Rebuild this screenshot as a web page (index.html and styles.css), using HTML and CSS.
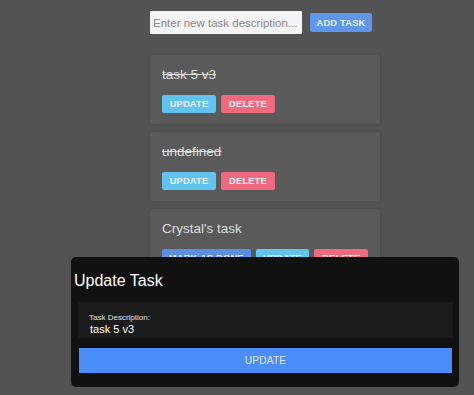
FILE: index.html
```html
<!DOCTYPE html>
<html lang="en">
<head>
<meta charset="utf-8">
<title>Tasks</title>
<link rel="stylesheet" href="styles.css">
</head>
<body>
<div class="app">
  <div class="add-row">
    <input class="task-input" type="text" placeholder="Enter new task description...">
    <button class="btn btn-add">ADD TASK</button>
  </div>
  <div class="task-list">
    <div class="card">
      <div class="title done">task 5 v3</div>
      <div class="actions">
        <button class="btn btn-update">UPDATE</button>
        <button class="btn btn-delete">DELETE</button>
      </div>
    </div>
    <div class="card">
      <div class="title done">undefined</div>
      <div class="actions">
        <button class="btn btn-update">UPDATE</button>
        <button class="btn btn-delete">DELETE</button>
      </div>
    </div>
    <div class="card">
      <div class="title">Crystal's task</div>
      <div class="actions">
        <button class="btn btn-mark">MARK AS DONE</button>
        <button class="btn btn-update">UPDATE</button>
        <button class="btn btn-delete">DELETE</button>
      </div>
    </div>
    <div class="card">
      <div class="title">New task</div>
      <div class="actions">
        <button class="btn btn-mark">MARK AS DONE</button>
        <button class="btn btn-update">UPDATE</button>
        <button class="btn btn-delete">DELETE</button>
      </div>
    </div>
  </div>
</div>

<div class="modal">
  <h2 class="modal-title">Update Task</h2>
  <div class="field">
    <div class="field-label">Task Description:</div>
    <div class="field-value">task 5 v3</div>
  </div>
  <button class="modal-btn">UPDATE</button>
</div>
</body>
</html>
```
FILE: styles.css
```css
html, body {
  margin: 0;
  padding: 0;
}
body {
  background: #535353;
  font-family: "Liberation Sans", Arial, sans-serif;
  width: 474px;
  height: 395px;
  overflow: hidden;
}
.app {
  margin-left: 150px;
  width: 230px;
  padding-top: 11px;
}
.add-row {
  display: flex;
  align-items: center;
  height: 23px;
}
.task-input {
  box-sizing: border-box;
  width: 152px;
  height: 23px;
  border: none;
  border-radius: 1px;
  background: #f3f3f3;
  padding: 0 3px;
  margin: 0;
  font-family: "Liberation Sans", Arial, sans-serif;
  font-size: 11.5px;
  color: #333;
  outline: none;
}
.task-input::placeholder {
  color: #8a8a8a;
}
.btn {
  box-sizing: border-box;
  border: none;
  margin: 0;
  padding: 0;
  height: 18px;
  border-radius: 2px;
  font-family: "Liberation Sans", Arial, sans-serif;
  font-size: 9.3px;
  font-weight: bold;
  letter-spacing: 0.2px;
  color: #e8f2fb;
  text-align: center;
  cursor: pointer;
}
.btn-add {
  margin-left: 8px;
  width: 62px;
  height: 19px;
  background: #5e97ea;
}
.task-list {
  margin-top: 21px;
  display: flex;
  flex-direction: column;
  gap: 8px;
}
.card {
  background: #5a5a5a;
  border-radius: 3px;
  padding: 9px 12px 11px;
  box-shadow: 0 0 4px rgba(0, 0, 0, 0.12);
}
.title {
  font-size: 13.5px;
  line-height: 21px;
  color: #dedede;
  margin-bottom: 10px;
}
.title.done {
  text-decoration: line-through;
}
.actions {
  display: flex;
  gap: 5px;
}
.btn-update {
  width: 54px;
  background: #63c3ef;
}
.btn-delete {
  width: 54px;
  background: #ef6a7e;
}
.btn-mark {
  width: 89px;
  background: #5b8fe4;
}
.modal {
  position: absolute;
  left: 71px;
  top: 257px;
  width: 388px;
  height: 130px;
  box-sizing: border-box;
  background: #111111;
  border-radius: 5px;
  padding: 14px 6px 14px 7px;
  display: flex;
  flex-direction: column;
}
.modal-title {
  margin: 0 0 12px -4px;
  font-size: 16px;
  font-weight: normal;
  line-height: 19px;
  color: #ffffff;
}
.field {
  box-sizing: border-box;
  height: 36px;
  background: #1b1b1b;
  padding: 11px 11px 0;
}
.field-label {
  font-size: 8px;
  line-height: 10px;
  color: #e2e2e2;
}
.field-value {
  font-size: 11px;
  line-height: 13px;
  color: #ffffff;
  margin-left: 1px;
}
.modal-btn {
  margin: 10px 1px 0 1px;
  height: 25px;
  border: none;
  padding: 0;
  background: #4a8cf8;
  color: #e3ebfb;
  font-family: "Liberation Sans", Arial, sans-serif;
  font-size: 10px;
  letter-spacing: 0.3px;
  cursor: pointer;
}
```
